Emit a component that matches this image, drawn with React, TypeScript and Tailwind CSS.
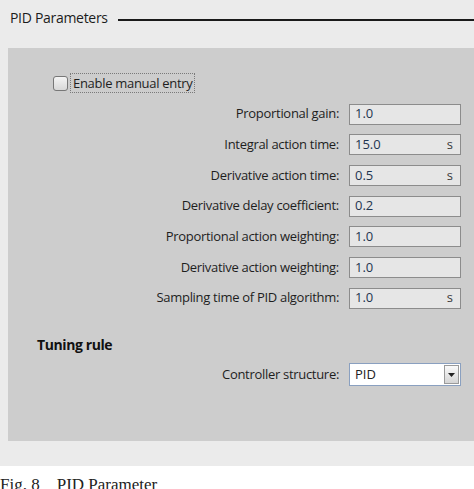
import React from 'react';

const rows: { label: string; value: string; unit?: string }[] = [
  { label: 'Proportional gain:', value: '1.0' },
  { label: 'Integral action time:', value: '15.0', unit: 's' },
  { label: 'Derivative action time:', value: '0.5', unit: 's' },
  { label: 'Derivative delay coefficient:', value: '0.2' },
  { label: 'Proportional action weighting:', value: '1.0' },
  { label: 'Derivative action weighting:', value: '1.0' },
  { label: 'Sampling time of PID algorithm:', value: '1.0', unit: 's' },
];

export default function App() {
  return (
    <div className="w-[474px] h-[489px] overflow-hidden bg-white" style={{ fontFamily: '"Open Sans", "Liberation Sans", sans-serif' }}>
      <div className="h-[466px] bg-[#ebebeb] pt-[8px] flex flex-col">
        {/* header */}
        <div className="flex items-center h-[20px] pl-[10px]">
          <span className="text-[14px] text-[#1c1c1c] tracking-[-0.3px] leading-none">PID Parameters</span>
          <div className="flex-1 ml-[10px] h-[2px] bg-[#1a1a1a] mt-[3px]" />
        </div>

        {/* panel */}
        <div className="ml-[8px] mt-[20px] h-[393px] bg-[#cdcdcd] pt-[25px]">
          <div className="flex items-center pl-[45px] h-[20px]">
            <span className="w-[15px] h-[15px] rounded-[3px] border border-[#777] bg-gradient-to-b from-[#f4f4f4] to-[#d8d8d8]" />
            <span className="ml-[2px] px-[2px] border border-dotted border-[#7a7a7a] text-[13px] text-[#1e1e1e] leading-[18px] tracking-[-0.3px]">
              Enable manual entry
            </span>
          </div>

          <div className="mt-[11px] flex flex-col gap-[10.7px]">
            {rows.map((r) => (
              <div key={r.label} className="flex items-center h-[20px]">
                <span className="w-[331px] text-right text-[13px] text-[#1e1e1e] tracking-[-0.3px]">{r.label}</span>
                <div className="ml-[10px] w-[112px] h-[21px] border border-[#8c8c8c] bg-[#e6e6e6] flex items-center px-[5px] text-[13px] text-[#1f3550]">
                  <span className="flex-1">{r.value}</span>
                  {r.unit && <span className="text-[#3a3a3a] mr-[2px]">{r.unit}</span>}
                </div>
              </div>
            ))}
          </div>

          <div className="mt-[30px] pl-[29px] text-[14px] font-bold text-[#111] tracking-[-0.4px] leading-none">Tuning rule</div>

          <div className="mt-[11px] flex items-center h-[23px]">
            <span className="w-[331px] text-right text-[13px] text-[#1e1e1e] tracking-[-0.3px]">Controller structure:</span>
            <div className="ml-[10px] w-[112px] h-[23px] border border-[#8aa0c0] bg-white flex items-center pl-[5px] text-[13px] text-[#222]">
              <span className="flex-1">PID</span>
              <div className="w-[15px] h-[19px] mr-[1px] border border-[#9a9a9a] bg-gradient-to-b from-[#fafafa] to-[#d5d5d5] flex items-center justify-center">
                <svg width="7" height="4" viewBox="0 0 7 4"><path d="M0 0h7L3.5 4z" fill="#222" /></svg>
              </div>
            </div>
          </div>
        </div>
      </div>
      <div className="pt-[10px] text-[17px] text-[#222] leading-none whitespace-pre" style={{ fontFamily: '"Liberation Serif", serif' }}>
        {'Fig. 8    PID Parameter'}
      </div>
    </div>
  );
}
